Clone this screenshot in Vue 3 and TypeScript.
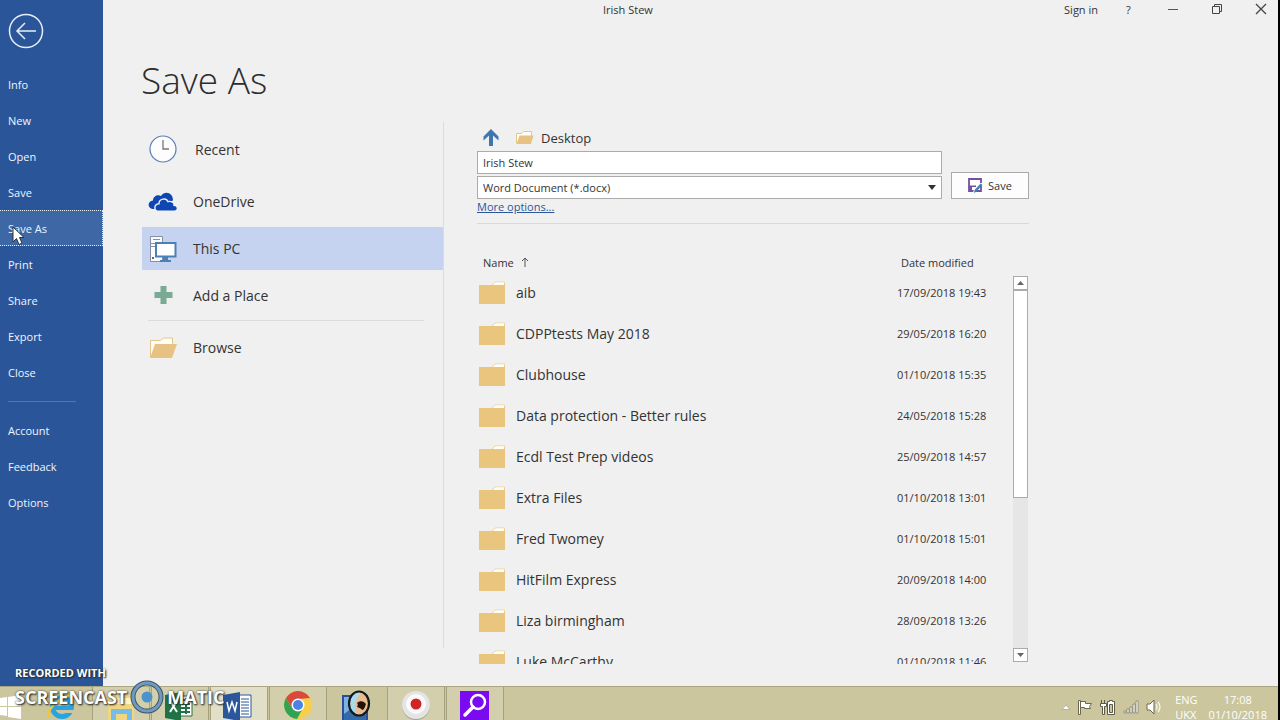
<script setup lang="ts">
import { ref } from 'vue'

interface Entry { name: string; date: string }

const menuTop = ['Info', 'New', 'Open', 'Save', 'Save As', 'Print', 'Share', 'Export', 'Close']
const menuBottom = ['Account', 'Feedback', 'Options']
const current = ref('Save As')
const fileName = ref('Irish Stew')
const fileType = ref('Word Document (*.docx)')

const entries: Entry[] = [
  { name: 'aib', date: '17/09/2018 19:43' },
  { name: 'CDPPtests May 2018', date: '29/05/2018 16:20' },
  { name: 'Clubhouse', date: '01/10/2018 15:35' },
  { name: 'Data protection - Better rules', date: '24/05/2018 15:28' },
  { name: 'Ecdl Test Prep videos', date: '25/09/2018 14:57' },
  { name: 'Extra Files', date: '01/10/2018 13:01' },
  { name: 'Fred Twomey', date: '01/10/2018 15:01' },
  { name: 'HitFilm Express', date: '20/09/2018 14:00' },
  { name: 'Liza birmingham', date: '28/09/2018 13:26' },
  { name: 'Luke McCarthy', date: '01/10/2018 11:46' },
]
</script>

<template>
  <div class="screen">
    <div class="backstage">
      <nav class="sidebar">
        <button class="back" aria-label="Back">
          <svg width="36" height="36" viewBox="0 0 36 36" fill="none" stroke="#e6eefa" stroke-width="1.5">
            <circle cx="18" cy="18" r="16.5" />
            <path d="M28 18H9M17 10l-8 8 8 8" />
          </svg>
        </button>
        <button
          v-for="m in menuTop"
          :key="m"
          class="menu"
          :class="{ active: m === current }"
          @click="current = m"
        >{{ m }}</button>
        <hr class="menu-line" />
        <button v-for="m in menuBottom" :key="m" class="menu" @click="current = m">{{ m }}</button>
      </nav>

      <div class="content">
        <header class="titlebar">
          <span class="doc">Irish Stew</span>
          <div class="window-tools">
            <button class="signin">Sign in</button>
            <button class="help" aria-label="Help">?</button>
            <button class="win" aria-label="Minimise">
              <svg width="12" height="12" viewBox="0 0 12 12"><path d="M1 6.5h10" stroke="#555" /></svg>
            </button>
            <button class="win" aria-label="Restore">
              <svg width="12" height="12" viewBox="0 0 12 12" fill="none" stroke="#444"><path d="M1.5 3.5h7v7h-7zM3.5 3.5v-2h7v7h-2" /></svg>
            </button>
            <button class="win" aria-label="Close window">
              <svg width="12" height="12" viewBox="0 0 12 12"><path d="M1 1l10 10M11 1L1 11" stroke="#444" stroke-width="1.3" /></svg>
            </button>
          </div>
        </header>

        <h1>Save As</h1>

        <div class="columns">
          <section class="places">
            <button class="place recent">
              <svg width="30" height="30" viewBox="0 0 30 30">
                <circle cx="15" cy="15" r="13" fill="#fdfdfe" stroke="#5b7fb5" stroke-width="1.2" />
                <path d="M15 6v9h6" fill="none" stroke="#777" stroke-width="1.3" />
              </svg>
              <span>Recent</span>
            </button>
            <button class="place onedrive">
              <svg width="30" height="30" viewBox="0 0 30 30">
                <path fill="#0f46b4" d="M6 22C-1 22-1 14 5 13.500 5 9 10 7 13 9c4-6 12-3 12 4l-6 8z" />
                <path fill="#0f46b4" stroke="#f0f0f0" stroke-width="1.4" d="M11 24.200c-5.500 0-5.500-7 0-7.500 0-5 7-6.500 9-2 3.500-1 6.500 1 6 3.500 4.500 0 4.500 6 .5 6z" />
              </svg>
              <span>OneDrive</span>
            </button>
            <button class="place selected">
              <svg width="30" height="30" viewBox="0 0 30 30">
                <path d="M2.500 2.500h12v25h-12z" fill="#fbfcfe" stroke="#8490a5" />
                <path d="M5 5.500h7M2 9.500h7M2 12.500h7" stroke="#8490a5" />
                <path d="M4 23h2v2H4z" fill="#666" />
                <path d="M8 9h19.500v13.500H8z" fill="#fff" stroke="#4a80b8" stroke-width="2" />
                <path d="M15 23h5v3h3v2H12v-2h3z" fill="#4a80b8" />
              </svg>
              <span>This PC</span>
            </button>
            <button class="place">
              <svg width="30" height="30" viewBox="0 0 30 30"><path d="M12.500 6h6v6h6v6h-6v6h-6v-6h-6v-6h6z" fill="#78aa94" /></svg>
              <span>Add a Place</span>
            </button>
            <hr class="place-line" />
            <button class="place browse">
              <svg width="30" height="30" viewBox="0 0 30 30">
                <path d="M2.500 24V7.500h10l3-2.500h9v7" fill="#fffdf8" stroke="#e6c58a" />
                <path d="M7 11h22l-5 14H2z" fill="#e8c283" />
              </svg>
              <span>Browse</span>
            </button>
          </section>

          <section class="files">
            <div class="path">
              <button class="up" aria-label="Up one level">
                <svg width="16" height="18" viewBox="0 0 16 18"><path d="M8 0l7.500 7.500v4L10 6.500V17H6V6.500L.5 11.500v-4z" fill="#3f76ad" /></svg>
              </button>
              <svg width="18" height="16" viewBox="0 0 18 16">
                <path d="M.5 13.500v-10h5l2-2h8v5" fill="#fffdf8" stroke="#e6c58a" />
                <path d="M3.500 5.500H17.500L15 14H.5z" fill="#e8c283" />
              </svg>
              <span>Desktop</span>
            </div>
            <div class="form">
              <div class="fields">
                <input v-model="fileName" type="text" aria-label="File name" />
                <div class="combo">
                  <select v-model="fileType" aria-label="File type">
                    <option>Word Document (*.docx)</option>
                  </select>
                  <svg class="caret" width="8" height="5" viewBox="0 0 8 5"><path d="M0 0h8L4 5z" fill="#333" /></svg>
                </div>
              </div>
              <button class="save">
                <svg width="15" height="15" viewBox="0 0 15 15">
                  <path d="M1 1h12v12H1z" fill="#fff" stroke="#7650a0" stroke-width="1.8" />
                  <path d="M1 7.500h7v1.500H4V13H1z" fill="#7650a0" />
                  <path d="M15 5L8 13l-3 2 1-4 6.500-6z" fill="#fff" />
                  <path d="M14.500 7l-6 6.500L6 15l.5-3 6-6.500z" fill="#4481b8" />
                </svg>
                <span>Save</span>
              </button>
            </div>
            <a class="more" href="#">More options...</a>
            <hr class="file-line" />

            <div class="listing">
              <div class="rows">
                <table>
                  <thead>
                    <tr>
                      <th class="c-name" scope="col">
                        Name
                        <svg width="8" height="10" viewBox="0 0 8 10" fill="none" stroke="#555"><path d="M4 10V1M1 4l3-3 3 3" /></svg>
                      </th>
                      <th class="c-date" scope="col">Date modified</th>
                    </tr>
                  </thead>
                  <tbody>
                    <tr v-for="e in entries" :key="e.name">
                      <td class="c-name">
                        <div class="file">
                          <svg width="26" height="24" viewBox="0 0 26 24">
                            <path d="M12 5l4-4h9.500v5z" fill="#fffdf8" stroke="#ecd3a0" />
                            <path d="M0 4h14l2-1h10v20H0z" fill="#e9c57e" />
                            <path d="M14 4l3-2.500h8V4z" fill="#fffdf8" />
                          </svg>
                          <span>{{ e.name }}</span>
                        </div>
                      </td>
                      <td class="c-date">{{ e.date }}</td>
                    </tr>
                  </tbody>
                </table>
              </div>
              <div class="scroll">
                <button class="arrow" aria-label="Scroll up"><svg width="7" height="4" viewBox="0 0 7 4"><path d="M0 4h7L3.500 0z" fill="#666" /></svg></button>
                <div class="track"><div class="thumb"></div></div>
                <button class="arrow" aria-label="Scroll down"><svg width="7" height="4" viewBox="0 0 7 4"><path d="M0 0h7L3.500 4z" fill="#666" /></svg></button>
              </div>
            </div>
          </section>
        </div>
      </div>
    </div>

    <footer class="taskbar">
      <button class="start" aria-label="Start">
        <svg width="21" height="24" viewBox="0 0 21 24" fill="#fff"><path d="M0 3l7-1v9H0zM8 2l13-2v11H8zM0 12h7v9l-7-1zM8 12h13v12L8 22z" /></svg>
      </button>
      <button class="task plain" aria-label="Internet Explorer">
        <svg width="32" height="32" viewBox="0 0 32 32" fill="none">
          <circle cx="16" cy="17" r="9.500" stroke="#2aa4df" stroke-width="5" />
          <path d="M9 18h18" stroke="#2aa4df" stroke-width="4" />
          <path d="M20 20h9v3h-9z" fill="#cbc69d" />
          <path d="M3 27C-1 19 19 3 29 5" stroke="#f0c63c" stroke-width="2.500" />
        </svg>
      </button>
      <button class="task" aria-label="File Explorer">
        <svg width="32" height="32" viewBox="0 0 32 32">
          <path d="M3 3h7l2 2h17v27H3z" fill="#f0d77f" />
          <path d="M5 8h22v6H5z" fill="#fff4bd" />
          <path d="M6 32V19h21v13h-5v-8H11v8z" fill="#75bce8" />
        </svg>
      </button>
      <button class="task" aria-label="Excel">
        <svg width="32" height="32" viewBox="0 0 32 32">
          <path d="M14 6h14v20H14z" fill="#fff" stroke="#207346" />
          <path d="M17 10h9M17 14h9M17 18h9M17 22h9M22 8v16" stroke="#207346" stroke-width="2" />
          <path d="M1 5l16-3v29L1 28z" fill="#207346" />
          <path d="M6 11l7 11M13 11L6 22" stroke="#fff" stroke-width="2" />
        </svg>
      </button>
      <button class="task lit" aria-label="Word">
        <svg width="32" height="32" viewBox="0 0 32 32">
          <path d="M14 5h14v22H14z" fill="#fff" stroke="#2b579a" />
          <path d="M18 9h8M18 12h8M18 15h8M18 18h8M18 21h8M18 24h8" stroke="#2b579a" stroke-width="1.200" />
          <path d="M0 5l17-3v29L0 28z" fill="#2b579a" />
          <path d="M4 12l2 9L9 12l3 9 2-9" fill="none" stroke="#fff" stroke-width="1.500" />
        </svg>
      </button>
      <button class="task" aria-label="Chrome">
        <svg width="30" height="30" viewBox="0 0 30 30">
          <circle cx="15" cy="15" r="14" fill="#f7cf49" />
          <path d="M2.900 8A14 14 0 0 1 27.100 8L15 9 9 18z" fill="#d9493c" />
          <path d="M2.900 8A14 14 0 0 0 14 29l6-11-5 3-6-3z" fill="#31a356" />
          <circle cx="15" cy="15" r="6.500" fill="#fff" />
          <circle cx="15" cy="15" r="5" fill="#4a83e8" />
        </svg>
      </button>
      <button class="task plain" aria-label="Picture viewer">
        <svg width="32" height="32" viewBox="0 0 32 32">
          <path d="M2 6h24v25H2z" fill="#7cb3de" stroke="#2c4d9e" stroke-width="2" />
          <path d="M3 24l8-6 14 7v6H3z" fill="#356aa8" />
          <ellipse cx="18" cy="13.500" rx="10" ry="12" fill="#e9bd91" />
          <path d="M9 11c1-7 6-10 11-8-5 5-8 12-4 22-5-1-8-6-7-14z" fill="#a8dcec" />
          <path d="M16 13c3-3 7-2 9 1-1 3-2 6-4 6-1-2-3-2-5-3 1-2 1-3 0-4z" fill="#24130b" />
          <ellipse cx="18" cy="13.500" rx="10" ry="12" fill="none" stroke="#14191c" stroke-width="2.200" />
        </svg>
      </button>
      <button class="task" aria-label="Recorder">
        <svg width="30" height="30" viewBox="0 0 30 30">
          <circle cx="15" cy="16" r="14" fill="#a5a28d" />
          <circle cx="15" cy="15" r="14" fill="#e4e4e4" />
          <circle cx="15" cy="14" r="10" fill="#fafafa" />
          <circle cx="15" cy="14" r="5.500" fill="#cf2526" />
        </svg>
      </button>
      <button class="task" aria-label="Magnifier">
        <svg width="30" height="30" viewBox="0 0 30 30">
          <path d="M0 1h29v29H0z" fill="#7a0af0" />
          <circle cx="18" cy="12" r="7" fill="none" stroke="#fff" stroke-width="2.500" />
          <path d="M13 17l-8 8" stroke="#fff" stroke-width="3.500" stroke-linecap="round" />
        </svg>
      </button>
      <div class="tray">
        <svg width="8" height="5" viewBox="0 0 8 5"><path d="M0 4.500h8L4 0z" fill="#fff" stroke="#888570" stroke-width=".5" /></svg>
        <svg width="16" height="16" viewBox="0 0 16 16" fill="#fff" stroke="#6a6850"><path d="M1.500 15.500v-14h2v14zM3.500 2.500h5v2h6l-2 3 1 2h-6v-1h-4z" /></svg>
        <svg width="16" height="16" viewBox="0 0 16 16" fill="#fff" stroke="#5c5a48">
          <path d="M7.500 2.500h2v-1h3v1h2v13h-7z" /><path d="M9.500 5.500h3v8h-3z" fill="#cbc69d" />
          <path d="M.5 4.500h6v3h-2v8h-2v-8h-2zM1.500 1v3M4.500 1v3" />
        </svg>
        <svg width="16" height="16" viewBox="0 0 16 16" fill="#fff" stroke="#77745e" stroke-width=".7"><path d="M1 12h2v2H1zM4 10h2v4H4zM7 8h2v6H7zM10 5h2v9h-2zM13 2h2v12h-2z" /></svg>
        <svg width="16" height="16" viewBox="0 0 16 16" fill="none"><path d="M1 5h3l4-4v14l-4-4H1z" fill="#fff" stroke="#6a6850" /><path d="M10 5q2 3 0 6M12 3q4 5 0 10" stroke="#f7f5e6" stroke-width="1.300" /></svg>
        <div class="lang"><span>ENG</span><span>UKX</span></div>
        <div class="clock"><span>17:08</span><span>01/10/2018</span></div>
      </div>
    </footer>

    <div class="watermark">
      <div class="wm-small">RECORDED WITH</div>
      <div class="wm-big">
        <span>SCREENCAST</span>
        <svg width="34" height="34" viewBox="0 0 34 34">
          <circle cx="17" cy="17" r="14" fill="none" stroke="#44515c" stroke-width="5" />
          <circle cx="17" cy="17" r="14" fill="none" stroke="#6c9cc4" stroke-width="3" />
          <circle cx="17" cy="17" r="5.500" fill="#4b93cd" />
        </svg>
        <span>MATIC</span>
      </div>
    </div>

    <svg class="pointer" width="13" height="20" viewBox="0 0 13 20">
      <path d="M1 1v15l3.500-3.500 2.500 6 3-1.500-2.500-5.500H12z" fill="#fff" stroke="#333" />
    </svg>
  </div>
</template>

<style>
html, body { margin: 0; height: 100%; overflow: hidden; }
#app { height: 100%; }
</style>

<style scoped>
* { box-sizing: border-box; }
.screen {
  height: 100vh;
  display: flex;
  flex-direction: column;
  position: relative;
  overflow: hidden;
  background: #f0f0f0;
  border-right: 2px solid #000;
  color: #333;
  font-family: "Open Sans", "Noto Sans", sans-serif;
  font-size: 11px;
}
button {
  font: inherit;
  color: inherit;
  background: none;
  border: 0;
  padding: 0;
  margin: 0;
  text-align: left;
}
svg { display: block; flex: none; }
hr { border: 0; height: 1px; margin: 0; }
.backstage { flex: 1; min-height: 0; display: flex; }
.sidebar {
  width: 103px;
  flex: none;
  background: #2a5699;
  color: #eef4ff;
  display: flex;
  flex-direction: column;
  padding-top: 13px;
}
.back { margin: 0 0 17px 8px; align-self: flex-start; }
.menu { height: 36px; flex: none; padding: 0 8px; border: 1px solid transparent; border-left: 0; }
.menu.active { background: #3e67a6; border: 1px dotted #e4ecf8; border-left: 0; }
.menu-line { background: #4f76b1; margin: 11px 27px 10px 8px; flex: none; }
.content { flex: 1; min-width: 0; display: flex; flex-direction: column; }
.titlebar { height: 18px; flex: none; display: flex; align-items: center; padding-left: 500px; }
.window-tools { margin-left: auto; display: flex; align-items: center; padding-right: 11px; }
.signin { margin-right: 28px; }
.help { width: 8px; margin-right: 33px; }
.win + .win { margin-left: 32px; }
h1 { margin: 32px 0 0 38px; font: 300 37px/60px "Open Sans", sans-serif; color: #2d2d2d; }
.columns { flex: 1; min-height: 0; display: flex; padding: 12px 0 22px 39px; }
.places { width: 302px; flex: none; border-right: 1px solid #dcdcdc; display: flex; flex-direction: column; font-size: 14px; margin-bottom: 16px; }
.place { height: 47px; flex: none; display: flex; align-items: center; gap: 15px; padding: 0 6px; }
.place.recent { height: 54px; gap: 17px; }
.place.onedrive { height: 51px; }
.place.selected { height: 43px; background: #c5d3f1; }
.place.selected + .place { height: 50px; }
.place-line { background: #dcdcdc; margin: 0 19px 0 6px; }
.place.browse { height: 53px; }
.files { flex: 0 1 552px; margin-left: 33px; min-width: 0; display: flex; flex-direction: column; }
.path { display: flex; align-items: center; height: 29px; padding: 2px 0 0 6px; font-size: 13px; flex: none; }
.up { margin-right: 17px; }
.path span { margin-left: 7px; }
.form { display: flex; align-items: flex-end; gap: 9px; flex: none; }
.fields { flex: 1; min-width: 0; display: flex; flex-direction: column; gap: 2px; }
input, select {
  width: 100%;
  height: 23px;
  display: block;
  margin: 0;
  padding: 0 5px;
  border: 1px solid #ababab;
  border-radius: 0;
  background: #fff;
  color: #333;
  font: inherit;
  appearance: none;
}
.combo { position: relative; }
.caret { position: absolute; right: 6px; top: 9px; }
.save { width: 78px; height: 27px; flex: none; display: flex; align-items: center; justify-content: center; gap: 5px; border: 1px solid #ababab; background: #fdfdfd; }
.more { color: #2b579a; line-height: 16px; align-self: flex-start; }
.file-line { background: #d9d9d9; margin: 8px 0 28px; flex: none; }
.listing { flex: 1; min-height: 0; display: flex; }
.rows { flex: 1; min-width: 0; overflow: hidden; margin-right: 22px; }
table { width: 100%; border-collapse: collapse; table-layout: fixed; }
th { font-weight: 400; text-align: left; height: 20px; padding: 0; }
th.c-name { padding-left: 6px; }
th svg { display: inline-block; margin-left: 4px; }
th.c-date { padding-left: 4px; }
.c-date { width: 94px; white-space: nowrap; }
td { padding: 0; height: 41px; }
.file { display: flex; align-items: center; gap: 11px; padding-left: 2px; font-size: 14px; }
.scroll { width: 15px; flex: none; display: flex; flex-direction: column; margin: 24px 1px 2px 0; }
.arrow { height: 14px; flex: none; display: flex; align-items: center; justify-content: center; border: 1px solid #ababab; background: #fff; }
.track { flex: 1; background: #e6e6e6; }
.thumb { height: 58%; background: #fff; border: 1px solid #ababab; }
.taskbar { height: 34px; flex: none; display: flex; overflow: hidden; background: #cbc69d; border-top: 1px solid #a9a684; }
.start { width: 33px; padding-top: 6px; }
.task { width: 58px; height: 36px; flex: none; padding-top: 3px; display: flex; justify-content: center; border: 1px solid #a5a17c; border-top: 0; background: #d3cfac; margin-right: 1px; }
.task.plain { background: none; border-color: transparent; }
.task.lit { background: #e2dfc9; }
.tray { margin-left: auto; display: flex; align-items: center; gap: 7px; padding: 4px 11px 0 0; color: #fff; height: 36px; }
.lang, .clock { display: flex; flex-direction: column; line-height: 15px; }
.lang { margin-left: 6px; }
.clock { margin-left: 4px; align-items: center; }
.watermark { position: absolute; left: 15px; top: 666px; color: #fff; font-family: "Open Sans", sans-serif; font-weight: 700; text-shadow: 1px 1px 2px #222, 0 0 2px #444; pointer-events: none; }
.wm-small { font-size: 11px; line-height: 14px; }
.wm-big { display: flex; align-items: center; gap: 3px; font-size: 18px; line-height: 30px; }
.pointer { position: absolute; left: 12px; top: 226px; }
</style>
